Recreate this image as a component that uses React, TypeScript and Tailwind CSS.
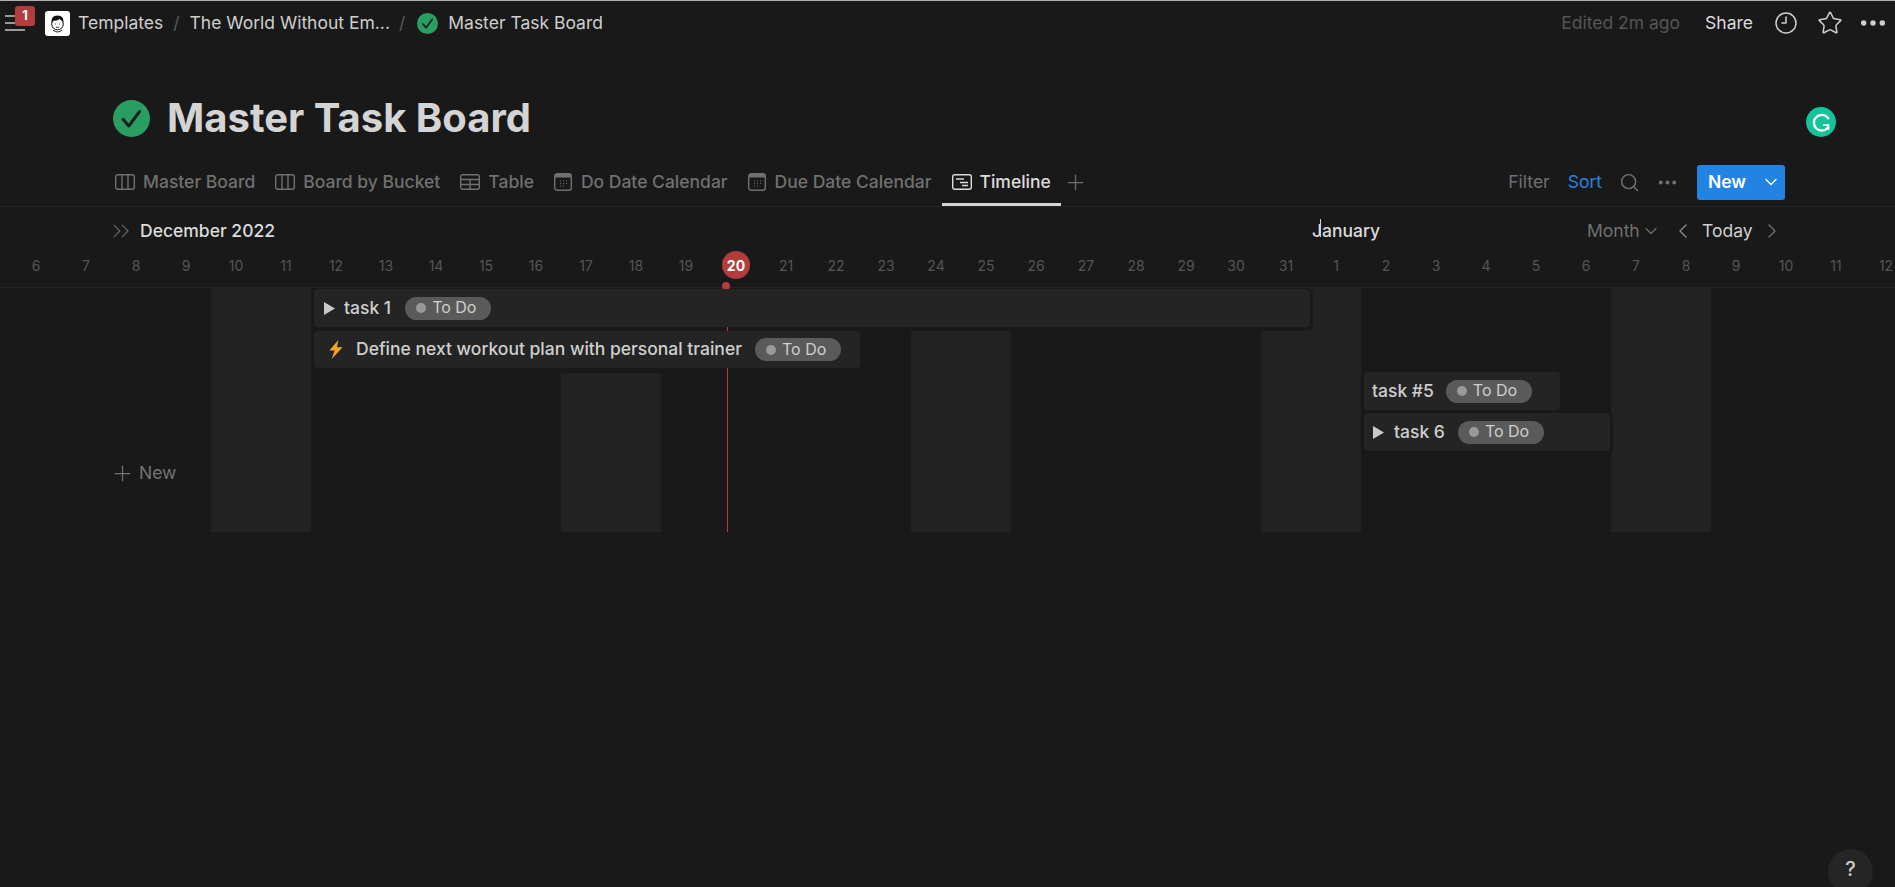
import { ChevronDown, ChevronLeft, ChevronRight, ChevronsRight, Clock9, MoreHorizontal, Plus, Search, Star } from "lucide-react";

const days = [6, 7, 8, 9, 10, 11, 12, 13, 14, 15, 16, 17, 18, 19, 20, 21, 22, 23, 24, 25, 26, 27, 28, 29, 30, 31, 1, 2, 3, 4, 5, 6, 7, 8, 9, 10, 11, 12];
const weekend = [4, 5, 11, 12, 18, 19, 25, 26, 32, 33];

function CheckBadge({ className }: { className: string }) {
  return (
    <svg viewBox="0 0 24 24" className={className}>
      <circle cx="12" cy="12" r="12" fill="#2a9d63" />
      <path d="M6.6 12.6l3.7 4.2 7-9.4" fill="none" stroke="#17201b" strokeWidth="2" strokeLinecap="round" strokeLinejoin="round" />
    </svg>
  );
}

function BoardIcon() {
  return (
    <svg viewBox="0 0 20 16" className="h-[16px] w-[20px]" fill="none" stroke="currentColor" strokeWidth="1.4">
      <rect x="0.7" y="0.7" width="18.6" height="14.6" rx="2" />
      <path d="M7 1v14M13 1v14" />
    </svg>
  );
}

function TableIcon() {
  return (
    <svg viewBox="0 0 20 16" className="h-[16px] w-[20px]" fill="none" stroke="currentColor" strokeWidth="1.4">
      <rect x="0.7" y="0.7" width="18.6" height="14.6" rx="2" />
      <path d="M1 5.500h18M1 10.500h18M10 5.500v10" />
    </svg>
  );
}

function CalendarIcon() {
  return (
    <svg viewBox="0 0 18 18" className="h-[18px] w-[18px]" fill="none">
      <rect x="0.7" y="0.7" width="16.6" height="16.6" rx="2.500" stroke="currentColor" strokeWidth="1.4" />
      <path d="M1 1h16v3.500H1z" fill="currentColor" />
      <path d="M6 8h1M9 8h1M12 8h1M6 10.500h1M9 10.500h1M12 10.500h1M6 13h1M9 13h1" stroke="currentColor" strokeWidth="1.200" />
    </svg>
  );
}

function TimelineIcon() {
  return (
    <svg viewBox="0 0 20 16" className="h-[16px] w-[20px]" fill="none" stroke="currentColor" strokeWidth="1.4">
      <rect x="0.7" y="0.7" width="18.6" height="14.6" rx="2" />
      <path d="M4 5h8M8 8.500h8M10 11.500h6" />
    </svg>
  );
}

function Avatar() {
  return (
    <svg viewBox="0 0 25 25" className="h-[25px] w-[25px] rounded-[3px] bg-white">
      <path d="M7 12c-1.500-4 1-7.500 5.500-7.500S19.500 8 18 12c-.5-2.500-2-3.500-3.500-4-1.500 1.500-4 2-5.500 1.500C8 10 7.500 11 7 12z" fill="#111" />
      <circle cx="12.500" cy="13" r="5.800" fill="none" stroke="#111" strokeWidth="1" />
      <path d="M10 13h.8M14 13h.8M11 16c1 .6 2 .6 3 0M8 19c3 2.500 6 2.500 9 0" stroke="#111" strokeWidth="1" fill="none" />
    </svg>
  );
}

function TodoPill() {
  return (
    <span className="flex h-[23px] w-[86px] shrink-0 items-center rounded-full bg-[#5a5a5a] pl-[11px] text-[16px] font-normal text-[#cfcfcf]">
      <span className="mr-[7px] h-[10px] w-[10px] rounded-full bg-[#999999]" />
      <span className="-mt-[2px] -ml-px">To Do</span>
    </span>
  );
}

function Triangle() {
  return (
    <svg viewBox="0 0 11 13" className="h-[13px] w-[11px] shrink-0">
      <path d="M0 0l11 6.500-11 6.500z" fill="#c9c9c9" />
    </svg>
  );
}

function Bolt() {
  return (
    <svg viewBox="0 0 16 20" className="h-[19px] w-[16px] shrink-0">
      <path d="M10.500 0L1 11h5.500L3.500 20 15 7.500H9z" fill="#f4a32a" />
    </svg>
  );
}

export default function App() {
  return (
    <div className="relative h-[887px] w-full overflow-hidden bg-[#191919] [font-family:Inter,sans-serif] text-[#cfcfcf]">
      <div className="h-px bg-[#b0b0b0]" />

      {/* top bar */}
      <header className="flex h-[44px] items-center pl-[5px] text-[17.5px]">
        <div className="relative mr-[20px] flex h-[16px] w-[20px] flex-col justify-between">
          <span className="h-[2px] bg-[#9a9a9a]" />
          <span className="h-[2px] bg-[#9a9a9a]" />
          <span className="h-[2px] bg-[#9a9a9a]" />
          <span className="absolute left-[10px] top-[-9px] flex h-[20px] w-[20px] items-center justify-center rounded-[3px] bg-[#b33c3c] text-[13px] font-bold text-white">1</span>
        </div>
        <Avatar />
        <span className="ml-[8px]">Templates</span>
        <span className="ml-[10px] text-[#5a5a5a]">/</span>
        <span className="ml-[10px]">The World Without Em...</span>
        <span className="ml-[9px] text-[#5a5a5a]">/</span>
        <CheckBadge className="ml-[12px] h-[21px] w-[21px]" />
        <span className="ml-[10px]">Master Task Board</span>
        <div className="ml-auto flex items-center pr-[6px]">
          <span className="text-[#555555]">Edited 2m ago</span>
          <span className="ml-[25px] text-[#dcdcdc]">Share</span>
          <Clock9 className="ml-[21px] h-[24px] w-[24px]" strokeWidth={1.5} />
          <Star className="ml-[19px] h-[26px] w-[26px]" strokeWidth={1.4} />
          <MoreHorizontal className="ml-[14px] h-[32px] w-[32px]" strokeWidth={2.1} />
        </div>
      </header>

      {/* title */}
      <div className="mt-[54px] flex h-[38px] items-center pl-[113px]">
        <CheckBadge className="h-[37px] w-[37px]" />
        <h1 className="ml-[17px] text-[40px] font-bold leading-none text-[#d4d4d4]">Master Task Board</h1>
      </div>
      <div className="absolute left-[1806px] top-[107px] flex h-[30px] w-[30px] items-center justify-center rounded-full bg-[#15c39a]">
        <svg viewBox="0 0 20 20" className="h-[21px] w-[21px]" fill="none" stroke="#ffffff" strokeWidth="2.200">
          <path d="M16.500 6A7.500 7.500 0 1 0 16 15" strokeLinecap="round" />
          <path d="M11.500 12.500H16.500V17" strokeWidth="1.800" />
        </svg>
      </div>

      {/* tabs */}
      <nav className="mt-[21px] flex h-[49px] items-stretch border-b border-[#252525] pl-[105px] text-[17.5px] font-medium text-[#707070]">
        <div className="flex items-center gap-[8px] border-b-[3px] border-transparent px-[10px] pt-[3px]"><BoardIcon />Master Board</div>
        <div className="flex items-center gap-[8px] border-b-[3px] border-transparent px-[10px] pt-[3px]"><BoardIcon />Board by Bucket</div>
        <div className="flex items-center gap-[8px] border-b-[3px] border-transparent px-[10px] pt-[3px]"><TableIcon />Table</div>
        <div className="flex items-center gap-[9px] border-b-[3px] border-transparent px-[10px] pt-[3px]"><CalendarIcon />Do Date Calendar</div>
        <div className="flex items-center gap-[9px] border-b-[3px] border-transparent px-[10px] pt-[3px]"><CalendarIcon />Due Date Calendar</div>
        <div className="flex items-center gap-[8px] border-b-[3px] border-[#d4d4d4] px-[10px] pt-[3px] text-[#dcdcdc]"><TimelineIcon />Timeline</div>
        <div className="ml-[2px] flex items-center">
          <Plus className="h-[25px] w-[25px]" strokeWidth={1.2} />
        </div>
        <div className="ml-auto flex items-center pr-[110px] font-normal">
          <span>Filter</span>
          <span className="ml-[18px] text-[#2383e2]">Sort</span>
          <Search className="ml-[17px] h-[21px] w-[21px]" strokeWidth={1.7} />
          <MoreHorizontal className="ml-[16px] h-[23px] w-[23px]" strokeWidth={2.2} />
          <div className="ml-[18px] flex h-[35px] w-[88px] items-center rounded-[3px] bg-[#2383e2] pl-[11px] font-semibold text-white">
            New
            <ChevronDown className="ml-[15px] h-[20px] w-[20px]" strokeWidth={1.6} />
          </div>
        </div>
      </nav>

      {/* month row */}
      <div className="flex h-[44px] items-center pl-[107px] pt-[4px] text-[17.5px]">
        <div className="flex w-[1205px] items-center font-medium text-[#dcdcdc]">
          <ChevronsRight className="mr-[5px] h-[28px] w-[28px] text-[#666666]" strokeWidth={1} />
          December 2022
        </div>
        <div className="relative w-[275px] font-medium text-[#dcdcdc]">
          January
          <span className="absolute left-[8px] top-[1px] h-[18px] w-px bg-[#cfcfcf]" />
        </div>
        <span className="w-[52px] text-[#707070]">Month</span>
        <ChevronDown className="ml-[2px] h-[20px] w-[20px] text-[#707070]" strokeWidth={1.4} />
        <ChevronLeft className="ml-[10px] h-[24px] w-[24px] text-[#8a8a8a]" strokeWidth={1.4} />
        <span className="ml-[7px] w-[50px] text-[#cfcfcf]">Today</span>
        <ChevronRight className="ml-[8px] h-[24px] w-[24px] text-[#707070]" strokeWidth={1.4} />
      </div>

      {/* day numbers */}
      <div className="relative flex h-[37px] border-b border-[#252525] pl-[11px] text-[14px] text-[#555555]">
        {days.map((day, i) => (
          <div key={i} className="flex h-[28px] w-[50px] shrink-0 items-center justify-center">
            {i === 14 ? (
              <span className="flex h-[28px] w-[28px] items-center justify-center rounded-full bg-[#b33c3c] font-bold text-white">{day}</span>
            ) : (
              day
            )}
          </div>
        ))}
        <span className="absolute left-[722px] top-[31px] z-10 h-[8px] w-[8px] rounded-full bg-[#b33c3c]" />
      </div>

      {/* timeline body */}
      <div className="relative h-[244px]">
        <div className="absolute inset-0 flex pl-[11px]">
          {days.map((day, i) => (
            <div key={i} className={weekend.includes(i) ? "w-[50px] shrink-0 bg-[#222222]" : "w-[50px] shrink-0"} />
          ))}
        </div>
        <div className="absolute bottom-0 left-[727px] top-0 z-10 w-px bg-[#b33c3c]" />

        <div className="relative text-[17.5px] font-medium text-[#cfcfcf]">
          <div className="ml-[311px] h-[43px] w-[1002px] rounded-[6px] bg-[#191919] px-[3px] pt-[1px]">
            <div className="relative z-20 flex h-[38px] items-center rounded-[4px] bg-[#242424] pl-[10px]">
              <Triangle />
              <span className="ml-[9px]">task 1</span>
              <span className="ml-[14px]"><TodoPill /></span>
            </div>
          </div>
          <div className="ml-[311px] h-[42px] w-[552px] bg-[#191919] px-[3px]">
            <div className="relative z-20 flex h-[37px] items-center rounded-[4px] bg-[#242424] pl-[14px]">
              <Bolt />
              <span className="ml-[12px]">Define next workout plan with personal trainer</span>
              <span className="ml-[13px]"><TodoPill /></span>
            </div>
          </div>
          <div className="ml-[1361px] h-[41px] w-[202px] bg-[#191919] px-[3px]">
            <div className="relative z-20 -mt-px flex h-[38px] items-center rounded-[4px] bg-[#242424] pl-[8px]">
              <span>task #5</span>
              <span className="ml-[12px]"><TodoPill /></span>
            </div>
          </div>
          <div className="ml-[1361px] h-[42px] w-[252px] rounded-[6px] bg-[#191919] px-[3px]">
            <div className="relative z-20 flex h-[38px] items-center rounded-[4px] bg-[#242424] pl-[9px]">
              <Triangle />
              <span className="ml-[10px]">task 6</span>
              <span className="ml-[13px]"><TodoPill /></span>
            </div>
          </div>
          <div className="ml-[110px] mt-[6px] flex h-[25px] items-center font-normal text-[#737373]">
            <Plus className="h-[25px] w-[25px]" strokeWidth={1.2} />
            <span className="ml-[4px]">New</span>
          </div>
        </div>
      </div>

      <div className="absolute left-[1828px] top-[849px] flex h-[45px] w-[45px] items-start justify-center rounded-full bg-[#252525] pt-[8px] text-[20px] font-medium leading-[24px] text-[#cfcfcf]">?</div>
    </div>
  );
}
